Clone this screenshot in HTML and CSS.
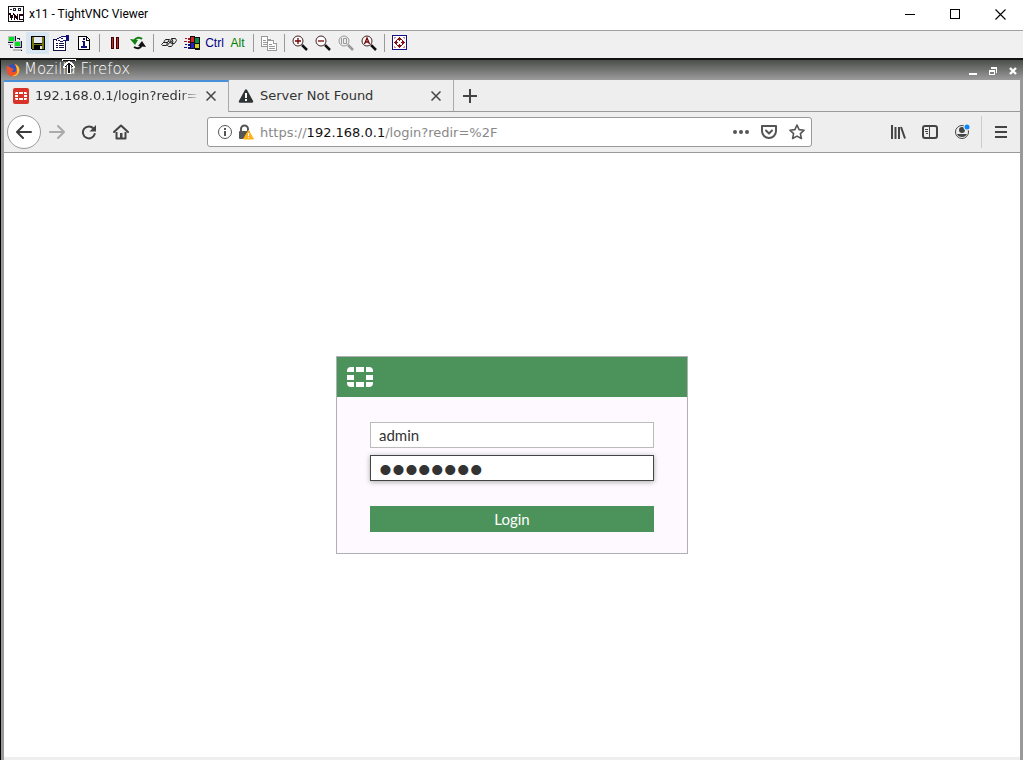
FILE: index.html
```html
<!DOCTYPE html>
<html lang="en">
<head>
    <meta charset="UTF-8">
    <meta name="viewport" content="width=device-width, initial-scale=1.0">
    <title>x11 - TightVNC Viewer</title>
    <link rel="stylesheet" href="styles.css">
</head>
<body>
    <!-- viewer window title -->
    <header class="viewer-title">
        <svg class="pixel" width="16" height="16" viewBox="0 0 16 16">
            <rect width="16" height="16" fill="#111"/>
            <rect x="1" y="1" width="14" height="5" fill="#fff"/>
            <path d="M2 3h2v1H2zM5 2h3v3H5zM10 2h3v3h-3z" fill="#223"/>
            <path d="M6 3h1v1H6zM11 3h1v1h-1z" fill="#fff"/>
            <rect x="1" y="6" width="14" height="9" fill="#fff"/>
            <path d="M1 7h2l1 4 1-4h1L4 14H3zM6 14V8h1l2 3V8h1v6H9l-2-3v3zM11 8h4v2h-3v3h3v1h-4z" fill="#200008"/>
        </svg>
        <h1>x11 - TightVNC Viewer</h1>
        <div class="window-buttons">
            <button aria-label="Minimize"><svg class="pixel" width="11" height="11"><path d="M0 5.5h10" stroke="#000"/></svg></button>
            <button aria-label="Maximize"><svg class="pixel" width="11" height="11"><path d="M.5 .5h9v9h-9z" fill="none" stroke="#000"/></svg></button>
            <button aria-label="Close"><svg width="11" height="11"><path d="M.5 .5l10 10M10.500 .5l-10 10" stroke="#000" stroke-width="1.100"/></svg></button>
        </div>
    </header>

    <!-- viewer toolbar -->
    <nav class="toolbar" aria-label="Viewer">
        <button aria-label="New connection"><svg class="pixel" width="16" height="16">
            <path d="M1 1h8v7H1zM7 6h8v7H7zM1 9h5v1H1zM6 14h9v2H6z" fill="#bbb"/>
            <path d="M2 2h5v4H2zM8 7h5v4H8z" fill="#0d2"/>
            <path d="M8 1h1v5H8zM1 7h5v1H1zM14 6h1v7h-1zM8 12h6v1H8zM10 3h3v1h-3zM12 3h1v2h-1zM3 10h1v3H3zM3 12h3v1H3zM14 15h1v1h-1z" fill="#114"/>
        </svg></button>
        <button class="hot" aria-label="Save session"><svg class="pixel" width="16" height="16">
            <path d="M1 1h14v14H2l-1-1z" fill="#000"/>
            <path d="M2 2h2v7h8V2h2v12h-2v-4H4v4H2z" fill="#777716"/>
            <path d="M4 2h8v6H4zM10 11h2v3h-2z" fill="#e4e8f0"/>
        </svg></button>
        <button aria-label="Connection options"><svg class="pixel" width="16" height="16">
            <path d="M.5 4.500h12v11H.5z" fill="#fff" stroke="#114"/>
            <path d="M3 8h2v1H3zM6 8h5v1H6zM3 10h2v1H3zM6 10h5v1H6zM3 12h2v1H3zM6 12h5v1H6z" fill="#114"/>
            <path d="M5 3h2V2h2V1h4v4h-1v1h-2v1H8L6 6H4V4z" fill="#fff"/>
            <path d="M13 0h3v6h-3zM8 1h5v1H8zM6 2h2v1H6zM4 3h2v1H4zM3 4h1v2H3zM5 5h2v1H5zM7 6h3v1H7zM10 5h3v1h-3zM8 3h2v1H8z" fill="#117"/>
        </svg></button>
        <button aria-label="Connection info"><svg class="pixel" width="16" height="16">
            <path d="M2.500 1.500h8l3 3v10h-11z" fill="#fff" stroke="#000"/>
            <path d="M10 1v4h4" fill="none" stroke="#000"/>
            <path d="M7 3h2v2H7zM6 6h3v5h2v2H5v-2h2V7H6z" fill="#117"/>
        </svg></button>
        <span class="sep"></span>
        <button aria-label="Pause"><svg class="pixel" width="16" height="16">
            <path d="M4 2h3v12H4zM9 2h3v12H9z" fill="#400"/><path d="M5 3h1v10H5zM10 3h1v10h-1z" fill="#b43030"/>
        </svg></button>
        <button aria-label="Refresh"><svg width="16" height="16">
            <path d="M12 4C10 2 6 2 4 6" fill="none" stroke="#118011" stroke-width="2"/><path d="M0 4l8 1-3 5z" fill="#118011"/>
            <path d="M4 12c3 2 6 2 8-2" fill="none" stroke="#111" stroke-width="2"/><path d="M8 11l8 1-4-6z" fill="#111"/>
        </svg></button>
        <span class="sep"></span>
        <button aria-label="Send Ctrl-Alt-Del"><svg width="16" height="16">
            <path d="M4.500 4.500h4l-2 3h-4zM10.500 3.500h4l1 2-2 3h-3l-1-2zM2.500 7.500h4l-1 3h-4l-1-1zM7.500 8.500l3-2 2 2-2 3h-3l-1-1z" fill="#e8e8e8" stroke="#222"/>
            <path d="M7 6l3 2M11 4l1 3" stroke="#222"/>
        </svg></button>
        <button aria-label="Send Win key"><svg class="pixel" width="16" height="16">
            <path d="M6 1h5v1h5v13h-5v-1H6z" fill="#111"/>
            <path d="M7 2h3v5H7z" fill="#d22"/><path d="M11 3h4v5h-4z" fill="#184"/>
            <path d="M7 8h3v5H7z" fill="#22c"/><path d="M11 9h4v4h-4z" fill="#cc2"/>
            <path d="M1 3h2v1H1zM4 3h2v2H4zM0 6h3v1H0zM4 6h2v2H4z" fill="#a12"/>
            <path d="M1 9h2v1H1zM4 9h2v2H4zM0 12h3v1H0zM4 12h2v2H4z" fill="#118"/>
        </svg></button>
        <button class="key-ctrl">Ctrl</button>
        <button class="key-alt">Alt</button>
        <span class="sep"></span>
        <button aria-label="Transfer files"><svg class="pixel" width="16" height="16" fill="#fff" stroke="#999">
            <path d="M.5 1.500h6l3 3v7h-9z"/><path d="M6.500 1.500v3h3M2 5.500h3M2 7.500h5M2 9.500h5"/>
            <path d="M6.500 5.500h6l3 3v7h-9z"/><path d="M12.500 5.500v3h3M8 9.500h3M8 11.500h6M8 13.500h6"/>
        </svg></button>
        <span class="sep"></span>
        <button aria-label="Zoom in"><svg width="16" height="16">
            <circle cx="6" cy="6" r="5" fill="#fff" stroke="#422"/><path d="M3 6h6M6 3v6" stroke="#700" stroke-width="1.300"/><path d="M10 10l5 5" stroke="#111" stroke-width="2.500"/>
        </svg></button>
        <button aria-label="Zoom out"><svg width="16" height="16">
            <circle cx="6" cy="6" r="5" fill="#fff" stroke="#422"/><path d="M3 6h6" stroke="#700" stroke-width="1.300"/><path d="M10 10l5 5" stroke="#111" stroke-width="2.500"/>
        </svg></button>
        <button aria-label="Zoom 100%"><svg width="16" height="16">
            <circle cx="6" cy="6" r="5" fill="#eee" stroke="#999"/><path d="M3.500 3v6M5.500 3.500h3v5h-3z" fill="none" stroke="#999"/><path d="M10 10l5 5" stroke="#999" stroke-width="2.500"/>
        </svg></button>
        <button aria-label="Zoom auto"><svg width="16" height="16">
            <circle cx="6" cy="6" r="5" fill="#fff" stroke="#422"/><path d="M3.500 9L6 3l2.500 6M4 7h4" fill="none" stroke="#700" stroke-width="1.300"/><path d="M10 10l5 5" stroke="#111" stroke-width="2.500"/>
        </svg></button>
        <span class="sep"></span>
        <button aria-label="Full screen"><svg class="pixel" width="16" height="16">
            <path d="M1 1h13v13H1z" fill="#fff"/>
            <path d="M0 0h15v15H0zM1 1v13h13V1z" fill="#118" fill-rule="evenodd"/>
            <path d="M7 2h1v1h1v1h1v1H8v1H7V5H5V4h1V3h1zM7 9h1v1h2v1H9v1H8v1H7v-1H6v-1H5v-1h2zM2 7h1V6h1V5h1v2h1v1H5v2H4V9H3V8H2zM9 7h1V5h1v1h1v1h1v1h-1v1h-1v1h-1V8H9z" fill="#811"/>
            <path d="M2 2h2v1H3v1H2zM11 2h2v2h-1V3h-1zM2 11h1v1h1v1H2zM12 11h1v2h-2v-1h1z" fill="#d88"/>
        </svg></button>
    </nav>

    <!-- remote desktop -->
    <div class="desktop">
        <div class="firefox-title">
            <svg width="14" height="14" viewBox="0 0 14 14">
                <circle cx="7" cy="7" r="6" fill="#3550b8"/>
                <path d="M1 3c2 0 3 1 4 2l3 1-2 2c1 2 4 1 4-1 1-2 0-4-2-6 4 1 6 4 5 7-1 7-12 7-12 0 0-2-1-3 0-5z" fill="#f0502a"/>
                <path d="M9 1c4 2 5 5 4 8-1 3-4 5-7 4 4-1 6-3 5-6 0-2-1-4-2-6z" fill="#ffc62a"/>
            </svg>
            <h2>Mozilla Firefox</h2>
            <div class="firefox-controls">
                <button aria-label="Minimize"><svg class="pixel" width="10" height="10"><path d="M1 7h8v2H1z" fill="#fff"/></svg></button>
                <button aria-label="Restore"><svg class="pixel" width="10" height="10"><path d="M3 1h6v6H8V3H3zM1 4h6v5H1zM2 6v2h4V6z" fill="#fff" fill-rule="evenodd"/></svg></button>
                <button aria-label="Close"><svg width="10" height="10"><path d="M2 2l6 6M8 2L2 8" stroke="#fff" stroke-width="2.400"/></svg></button>
            </div>
            <svg class="pixel pointer" width="14" height="16"><path d="M0 0h14v2H0zM6 2h2v1h2v1h1v1h1v2h1v2h-3V7H9v8H5V7H4v2H1V7h1V5h1V4h1V3h2z" fill="#fff"/><path d="M1 1h12v1H1zM6 4h2v10H6zM5 5h4v1H5zM4 6h1v1H4zM9 6h1v1H9zM3 7h1v1H3zM10 7h1v1h-1z" fill="#111"/></svg>
        </div>

        <div class="tabs">
            <div class="tab active">
                <svg width="16" height="16" viewBox="0 0 16 16">
                    <rect width="16" height="16" rx="2" fill="#d93228"/>
                    <path d="M3 4h2v2H2V5zM6 4h4v2H6zM11 4h2l1 1v1h-3zM2 7h3v2H2zM11 7h3v2h-3zM2 10h3v2H3l-1-1zM6 10h4v2H6zM11 10h3v1l-1 1h-2z" fill="#fff"/>
                </svg>
                <span class="tab-label fade">192.168.0.1/login?redir=%2F</span>
                <button aria-label="Close tab"><svg width="10" height="10"><path d="M.5 .5l9 9M9.500 .5l-9 9" stroke="#444" stroke-width="1.500"/></svg></button>
            </div>
            <div class="tab">
                <svg width="16" height="16" viewBox="0 0 16 16">
                    <path d="M8 2.500L14 13.500H2z" fill="#2e3436" stroke="#2e3436" stroke-width="2.500" stroke-linejoin="round"/>
                    <path d="M7 5h2v5H7zM7 11h2v2H7z" fill="#fff"/>
                </svg>
                <span class="tab-label">Server Not Found</span>
                <button aria-label="Close tab"><svg width="10" height="10"><path d="M.5 .5l9 9M9.500 .5l-9 9" stroke="#444" stroke-width="1.500"/></svg></button>
            </div>
            <button class="new-tab" aria-label="New tab"><svg width="14" height="14"><path d="M0 7h14M7 0v14" stroke="#444" stroke-width="2"/></svg></button>
        </div>

        <div class="navbar">
            <button class="back" aria-label="Back"><svg width="16" height="16" fill="none" stroke="#3b3b3d" stroke-width="2" stroke-linecap="round" stroke-linejoin="round"><path d="M15 8H1.500M7 2L1 8l6 6"/></svg></button>
            <button aria-label="Forward" disabled><svg width="16" height="16" fill="none" stroke="#aaa" stroke-width="2" stroke-linecap="round" stroke-linejoin="round"><path d="M1 8h13.500M9 2l6 6-6 6"/></svg></button>
            <button aria-label="Reload"><svg width="16" height="16"><path d="M12.500 4.500a6 6 0 1 0 1.200 5.500" fill="none" stroke="#444" stroke-width="2" stroke-linecap="round"/><path d="M15 1v6.500H8.500z" fill="#444"/></svg></button>
            <button aria-label="Home"><svg width="16" height="16"><path d="M1 8l7-6.500L15 8" fill="none" stroke="#444" stroke-width="2" stroke-linecap="round" stroke-linejoin="round"/><path d="M3.500 8v6.500h9V8" fill="none" stroke="#444" stroke-width="2" stroke-linejoin="round"/><path d="M7 9h2.500v5H7z" fill="#444"/></svg></button>
            <div class="urlbar">
                <button aria-label="Site information"><svg width="16" height="16"><circle cx="8" cy="8" r="6.500" fill="none" stroke="#555"/><path d="M7 7h2v5H7zM7 4h2v2H7z" fill="#555"/></svg></button>
                <button aria-label="Connection security"><svg width="16" height="16"><path d="M3 8V5a3.500 3.500 0 0 1 7 0v2" fill="none" stroke="#555" stroke-width="2"/><rect x="1" y="7" width="11" height="8" rx="1" fill="#555"/><path d="M10.500 6.500L15.500 15h-10z" fill="#ffb21d" stroke="#ffb21d" stroke-linejoin="round"/><path d="M10 9h1v3h-1zM10 13h1v1h-1z" fill="#fff"/></svg></button>
                <a class="url" href="#">https://<b>192.168.0.1</b>/login?redir=%2F</a>
                <div class="url-actions">
                    <button aria-label="Page actions"><svg width="16" height="16" fill="#555"><circle cx="2" cy="8" r="2"/><circle cx="8" cy="8" r="2"/><circle cx="14" cy="8" r="2"/></svg></button>
                    <button aria-label="Save to Pocket"><svg width="16" height="16" fill="none" stroke="#555" stroke-width="2" stroke-linejoin="round" stroke-linecap="round"><path d="M1 2h14v5a7 7 0 0 1-14 0zM5 6.500l3 3 3-3"/></svg></button>
                    <button aria-label="Bookmark"><svg width="16" height="16"><path d="M8 1l2.100 4.600 5 .6-3.700 3.400 1 4.900L8 12.100l-4.400 2.400 1-4.900L.9 6.200l5-.6z" fill="none" stroke="#555" stroke-width="1.600" stroke-linejoin="round"/></svg></button>
                </div>
            </div>
            <div class="nav-actions">
                <button aria-label="Library"><svg width="16" height="16" stroke="#444" stroke-width="2"><path d="M2 1v14M5.500 3v12M9 3v12M11 3l4 11.500"/></svg></button>
                <button aria-label="Sidebars"><svg width="16" height="16"><rect x="1" y="2" width="14" height="12" rx="2" fill="none" stroke="#444" stroke-width="2"/><path d="M7.500 2v12M3 5.500h3M3 7.500h3M4 9.500h2" stroke="#444"/></svg></button>
                <button aria-label="Account"><svg width="18" height="18"><circle cx="9" cy="9" r="6.500" fill="none" stroke="#444"/><circle cx="9" cy="7" r="3" fill="#444"/><path d="M4 11h10c-1 4-9 4-10 0z" fill="#444"/><circle cx="14" cy="4" r="3.500" fill="#eee"/><circle cx="14" cy="4" r="2.500" fill="#0a84ff"/></svg></button>
            </div>
            <button class="menu" aria-label="Open menu"><svg class="pixel" width="12" height="12"><path d="M0 0h12v2H0zM0 5h12v2H0zM0 10h12v2H0z" fill="#444"/></svg></button>
        </div>

        <main class="page">
            <form class="login">
                <div class="login-header">
                    <svg width="28" height="22" viewBox="0 0 28 22" fill="#fff">
                        <path d="M5 1h3v5H1V5q0-4 4-4zM10 1h8v5h-8zM20 1h3q4 0 4 4v1h-7zM1 9h7v5H1zM20 9h7v5h-7zM1 16h7v5H5q-4 0-4-4zM10 16h8v5h-8zM20 16h7v1q0 4-4 4h-3z"/>
                    </svg>
                </div>
                <div class="login-body">
                    <input type="text" value="admin" aria-label="Username">
                    <input class="secret" type="password" value="fortinet" aria-label="Password">
                    <button type="button">Login</button>
                </div>
            </form>
        </main>
    </div>
</body>
</html>
```
FILE: styles.css
```css
* {
  box-sizing: border-box;
}
body {
  margin: 0;
  height: 100vh;
  display: flex;
  flex-direction: column;
  background: #fff;
  font-family: "DejaVu Sans", sans-serif;
  font-size: 13px;
  overflow: hidden;
}
h1, h2 {
  margin: 0;
  font-weight: normal;
}
button {
  display: flex;
  align-items: center;
  justify-content: center;
  padding: 0;
  border: 0;
  background: none;
  font: inherit;
}
svg {
  display: block;
  flex: none;
}
.pixel {
  shape-rendering: crispEdges;
}

/* viewer */
.viewer-title {
  display: flex;
  align-items: center;
  height: 30px;
  flex: none;
  padding-bottom: 2px;
  padding-left: 8px;
  gap: 5px;
}
.viewer-title h1 {
  font: 12px Roboto, sans-serif;
}
.window-buttons {
  display: flex;
  margin-left: auto;
}
.window-buttons button {
  width: 45px;
  height: 28px;
}
.toolbar {
  display: flex;
  align-items: center;
  height: 28px;
  flex: none;
  padding: 0 3px 4px;
  border-top: 1px solid #a0a0a0;
  background: #f0f0f0;
  font: 12px "Liberation Sans", sans-serif;
}
.toolbar button {
  width: 23px;
  height: 22px;
}
.toolbar .hot {
  background: #d8e6f2;
}
.toolbar .key-ctrl {
  color: #000080;
}
.toolbar .key-alt {
  color: #008000;
}
.sep {
  width: 8px;
  height: 18px;
  background: linear-gradient(#999, #999) center / 1px 100% no-repeat;
}

/* firefox window */
.desktop {
  flex: 1;
  display: flex;
  flex-direction: column;
  padding: 0 3px;
  border-top: 2px solid #111;
  border-left: 1px solid #000;
  background: #999;
}
.firefox-title {
  position: relative;
  display: flex;
  align-items: center;
  height: 19px;
  flex: none;
  margin: 0 -3px;
  padding: 0 5px;
  gap: 4px;
  background: linear-gradient(#4b4e4a, #989898);
  color: #fff;
}
.firefox-title h2 {
  font-size: 15px;
  font-weight: 200;
  line-height: 19px;
}
.firefox-controls {
  display: flex;
  gap: 10px;
  margin-left: auto;
  padding-top: 2px;
}
.pointer {
  position: absolute;
  left: 61px;
  top: -1px;
}
.tabs {
  display: flex;
  height: 33px;
  flex: none;
  border-top: 1px solid #999;
  background: #eee;
}
.tab {
  display: flex;
  align-items: center;
  width: 225px;
  padding: 0 12px 0 9px;
  gap: 6px;
  border-right: 1px solid #aaa;
  border-bottom: 1px solid #999;
  color: #333;
}
.tab.active {
  padding-bottom: 3px;
  border-top: 2px solid #4a90d9;
  border-bottom: 0;
}
.tab-label {
  flex: 1;
  overflow: hidden;
  white-space: nowrap;
}
.tab .fade {
  mask-image: linear-gradient(to left, transparent, #000 20px);
}
.new-tab {
  flex: 1;
  justify-content: flex-start;
  padding-left: 9px;
  border-bottom: 1px solid #999;
}
.navbar {
  display: flex;
  align-items: center;
  height: 41px;
  flex: none;
  padding-left: 3px;
  border-bottom: 1px solid #999;
  background: #eee;
}
.navbar button {
  width: 32px;
  height: 32px;
}
.navbar .back {
  width: 34px;
  height: 34px;
  border: 1px solid #999;
  border-radius: 50%;
  background: #fff;
}
.urlbar {
  display: flex;
  align-items: center;
  flex: 1;
  height: 30px;
  margin: 0 70px;
  padding-left: 6px;
  border: 1px solid #999;
  border-radius: 3px;
  background: #fff;
}
.navbar .urlbar button {
  width: 21px;
  height: 28px;
}
.url {
  flex: 1;
  margin-left: 4px;
  color: #888;
  text-decoration: none;
  white-space: nowrap;
}
.url b {
  color: #111;
  font-weight: normal;
}
.url-actions, .nav-actions {
  display: flex;
}
.navbar .urlbar .url-actions button {
  width: 28px;
}
.navbar .menu {
  width: 39px;
  margin-left: 3px;
  border-left: 1px solid #ccc;
}

/* login page */
.page {
  flex: 1;
  display: flex;
  align-items: center;
  justify-content: center;
  border-bottom: 3px solid #eee;
  background: #fff;
}
.login {
  width: 352px;
  border: 1px solid #b0b0b4;
  background: #fdf9ff;
  font: 15px Lato, sans-serif;
}
.login-header {
  display: flex;
  align-items: center;
  height: 40px;
  padding-left: 9px;
  background: #4b935b;
}
.login-body {
  display: flex;
  flex-direction: column;
  padding: 25px 33px 21px;
}
.login-body input {
  height: 26px;
  margin: 0 0 7px;
  padding: 0 8px;
  border: 1px solid #bbb;
  outline: 0;
  background: #fff;
  color: #333;
  font: inherit;
}
.login-body .secret {
  margin-bottom: 25px;
  padding-top: 4px;
  border-color: #444;
  box-shadow: 0 1px 5px #aaa;
  font: 37px "Liberation Sans", sans-serif;
}
.login-body button {
  height: 26px;
  background: #4b935b;
  color: #fff;
}
```
